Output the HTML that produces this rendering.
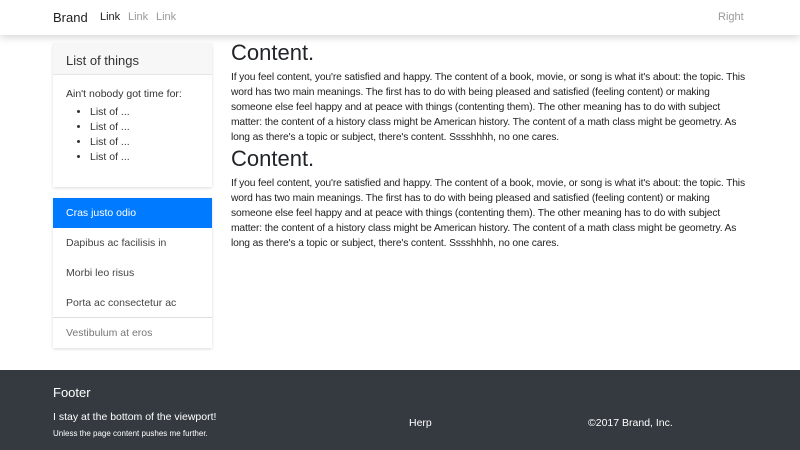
<!DOCTYPE html>
<html><head><style>
*{box-sizing:border-box;margin:0;padding:0}
body{width:800px;height:450px;overflow:hidden;font-family:"Liberation Sans",sans-serif;background:#fff;color:#212529;position:relative}
.nav{position:absolute;left:0;top:0;width:800px;height:35px;background:#fff;box-shadow:0 2px 8px rgba(0,0,0,.18);z-index:2}
.nav span{position:absolute;top:11px;font-size:11px;color:#999}
.side{position:absolute;left:53px;top:44px;width:159px}
.card{box-shadow:0 1px 3px rgba(0,0,0,.15);height:143px}
.ch{background:#f7f7f7;height:31px;border-bottom:1px solid #e5e5e5;font-size:13px;padding:9px 0 0 13px;color:#333}
.cb{padding:13px 13px;font-size:10.5px;color:#333}
.cb ul{margin:5px 0 0 24px}
.cb li{line-height:15px}
.lg{position:absolute;top:154px;left:0;width:159px;box-shadow:0 1px 3px rgba(0,0,0,.15)}
.lg div{height:30px;font-size:10.5px;padding:9px 0 0 13px;color:#444}
.lg .a{background:#007bff;color:#fff}
.main{position:absolute;left:231px;top:40px;width:520px}
h1{font-size:22px;font-weight:normal;line-height:26px}
p{font-size:10.3px;letter-spacing:-0.15px;line-height:15px;margin-bottom:0;color:#222}
.f{position:absolute;left:0;top:370px;width:800px;height:80px;background:#343a40;color:#fff}
</style></head><body>
<div class="nav">
<span style="left:53px;top:10px;font-size:13px;color:#222">Brand</span>
<span style="left:100px;color:#222">Link</span>
<span style="left:128px">Link</span>
<span style="left:156px">Link</span>
<span style="left:718px">Right</span>
</div>
<div class="side">
<div class="card"><div class="ch">List of things</div>
<div class="cb">Ain't nobody got time for:<ul><li>List of ...</li><li>List of ...</li><li>List of ...</li><li>List of ...</li></ul></div></div>
<div class="lg"><div class="a">Cras justo odio</div><div>Dapibus ac facilisis in</div><div>Morbi leo risus</div><div style="border-bottom:1px solid #ddd">Porta ac consectetur ac</div><div style="color:#777">Vestibulum at eros</div></div>
</div>
<div class="main">
<h1>Content.</h1>
<p style="margin-top:4px">If you feel content, you're satisfied and happy. The content of a book, movie, or song is what it's about: the topic. This word has two main meanings. The first has to do with being pleased and satisfied (feeling content) or making someone else feel happy and at peace with things (contenting them). The other meaning has to do with subject matter: the content of a history class might be American history. The content of a math class might be geometry. As long as there's a topic or subject, there's content. Sssshhhh, no one cares.</p>
<h1 style="margin-top:1px">Content.</h1>
<p style="margin-top:4px">If you feel content, you're satisfied and happy. The content of a book, movie, or song is what it's about: the topic. This word has two main meanings. The first has to do with being pleased and satisfied (feeling content) or making someone else feel happy and at peace with things (contenting them). The other meaning has to do with subject matter: the content of a history class might be American history. The content of a math class might be geometry. As long as there's a topic or subject, there's content. Sssshhhh, no one cares.</p>
</div>
<div class="f">
<div style="position:absolute;left:53px;top:15px;font-size:13px">Footer</div>
<div style="position:absolute;left:53px;top:41px;font-size:10.5px">I stay at the bottom of the viewport!</div>
<div style="position:absolute;left:53px;top:59px;font-size:8px">Unless the page content pushes me further.</div>
<div style="position:absolute;left:409px;top:47px;font-size:10.5px">Herp</div>
<div style="position:absolute;left:588px;top:47px;font-size:10.5px">©2017 Brand, Inc.</div>
</div>
</body></html>
